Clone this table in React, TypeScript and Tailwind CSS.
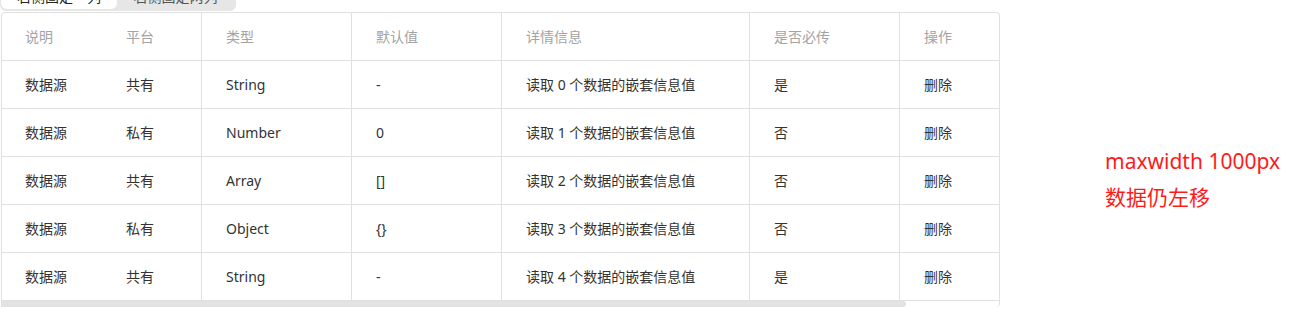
import React from 'react';

const rows = [
  { desc: '数据源', platform: '共有', type: 'String', def: '-', detail: '读取 0 个数据的嵌套信息值', required: '是' },
  { desc: '数据源', platform: '私有', type: 'Number', def: '0', detail: '读取 1 个数据的嵌套信息值', required: '否' },
  { desc: '数据源', platform: '共有', type: 'Array', def: '[]', detail: '读取 2 个数据的嵌套信息值', required: '否' },
  { desc: '数据源', platform: '私有', type: 'Object', def: '{}', detail: '读取 3 个数据的嵌套信息值', required: '否' },
  { desc: '数据源', platform: '共有', type: 'String', def: '-', detail: '读取 4 个数据的嵌套信息值', required: '是' },
];

const cols = 'grid grid-cols-[100px_100px_150px_150px_248px_150px_99px]';
const cell = 'h-[48px] flex items-center pl-6 border-b border-[#e0e0e0]';

function Row({ values, head }: { values: string[]; head?: boolean }) {
  return (
    <div className={`${cols} ${head ? 'text-[#a3a3a3]' : 'text-[#333]'}`}>
      {values.map((v, i) => (
        <div
          key={i}
          className={`${cell} ${i > 0 && i < values.length - 1 ? 'border-r' : ''} ${i === 0 ? 'pl-[23px]' : ''}`}
        >
          {v}
        </div>
      ))}
    </div>
  );
}

export default function App() {
  return (
    <div className="flex bg-white font-['Noto_Sans','Noto_Sans_CJK_SC',sans-serif] text-[14px] h-[334px] overflow-hidden">
      <div className="w-[1000px] shrink-0">
        <div className="h-[11px] overflow-hidden flex items-end">
          <div className="flex bg-[#e6e6e6] rounded-b-md p-[2px] pl-px">
            <div className="w-[116px] h-[24px] leading-[24px] flex items-center justify-center bg-white rounded-md text-[#222]">
              右侧固定一列
            </div>
            <div className="w-[117px] h-[24px] leading-[24px] flex items-center justify-center text-[#555]">
              右侧固定两列
            </div>
          </div>
        </div>
        <div className="mt-px ml-px border-l border-t border-r border-[#e0e0e0] rounded-t rounded-br">
          <Row head values={['说明', '平台', '类型', '默认值', '详情信息', '是否必传', '操作']} />
          {rows.map((r, i) => (
            <Row key={i} values={[r.desc, r.platform, r.type, r.def, r.detail, r.required, '删除']} />
          ))}
          <div className="h-[6px]">
            <div className="w-[904px] h-[6px] bg-[#e3e3e3] rounded-r-full" />
          </div>
        </div>
      </div>
      <div className="ml-[105px] mt-[143px] text-[21px] leading-[36px] text-[#ff1a1a] whitespace-nowrap">
        <div>maxwidth 1000px</div>
        <div>数据仍左移</div>
      </div>
    </div>
  );
}
